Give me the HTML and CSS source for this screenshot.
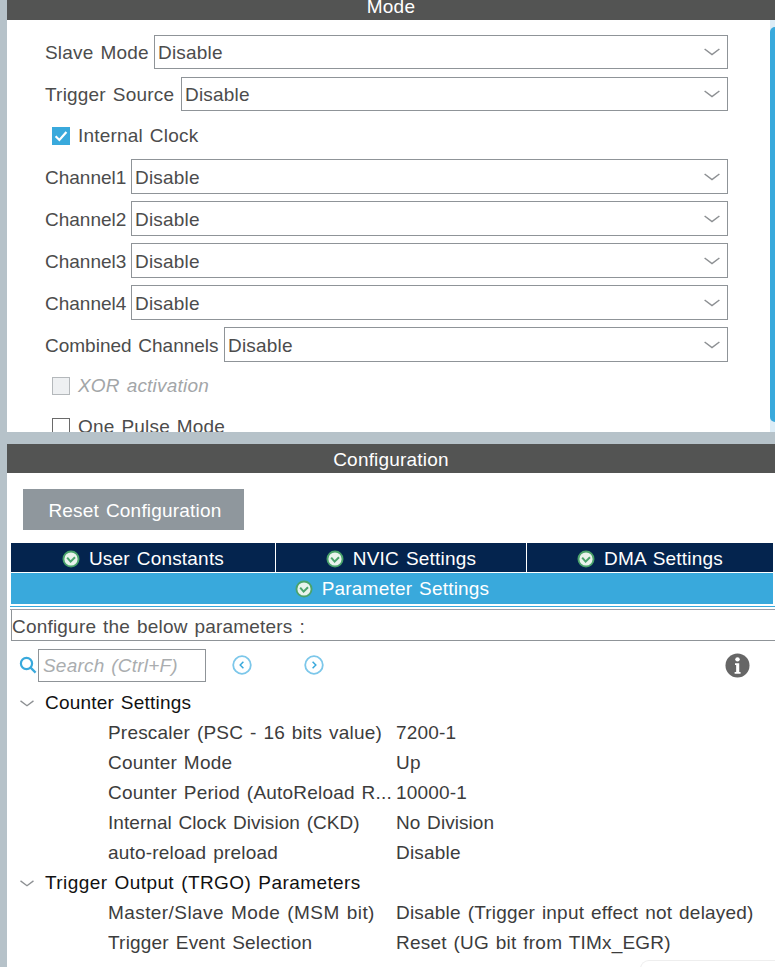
FILE: index.html
```html
<!DOCTYPE html>
<html lang="en">
<head>
<meta charset="utf-8">
<title>Mode and Configuration</title>
<link rel="stylesheet" href="styles.css">
</head>
<body>
<svg class="defs" width="0" height="0" aria-hidden="true">
  <symbol id="ok" viewBox="0 0 18 18">
    <circle cx="9" cy="9" r="8.5" fill="#4aa36b"/>
    <circle cx="9" cy="9" r="6.6" fill="#e9f3ec"/>
    <path d="M5.2 7.6 8.6 11.6 13 7.2" fill="none" stroke="#4aa36b" stroke-width="2"/>
  </symbol>
  <symbol id="chev" viewBox="0 0 16 8">
    <path d="M.6 1 8 6.6 15.4 1" fill="none" stroke="#8d9093" stroke-width="1.5"/>
  </symbol>
</svg>
<main class="app">
  <section class="mode">
    <h2 class="bar bar-mode">Mode</h2>
    <div class="mode-body">
      <div class="row"><span class="lbl w-slave">Slave Mode</span><div class="sel">Disable<svg class="chev"><use href="#chev"/></svg></div></div>
      <div class="row"><span class="lbl w-trigger">Trigger Source</span><div class="sel">Disable<svg class="chev"><use href="#chev"/></svg></div></div>
      <div class="check-row first"><span class="box on"><svg viewBox="0 0 18 18"><path d="M3.6 9.2 7.4 13 14.4 5" fill="none" stroke="#fff" stroke-width="2.2"/></svg></span><span class="txt">Internal Clock</span></div>
      <div class="row tall"><span class="lbl w-channel">Channel1</span><div class="sel">Disable<svg class="chev"><use href="#chev"/></svg></div></div>
      <div class="row tall"><span class="lbl w-channel">Channel2</span><div class="sel">Disable<svg class="chev"><use href="#chev"/></svg></div></div>
      <div class="row tall"><span class="lbl w-channel">Channel3</span><div class="sel">Disable<svg class="chev"><use href="#chev"/></svg></div></div>
      <div class="row tall"><span class="lbl w-channel">Channel4</span><div class="sel">Disable<svg class="chev"><use href="#chev"/></svg></div></div>
      <div class="row tall"><span class="lbl w-combined">Combined Channels</span><div class="sel">Disable<svg class="chev"><use href="#chev"/></svg></div></div>
      <div class="check-row"><span class="box off"></span><span class="txt dim">XOR activation</span></div>
      <div class="check-row"><span class="box"></span><span class="txt">One Pulse Mode</span></div>
    </div>
    <div class="scroll-track"><div class="scroll-thumb"></div></div>
  </section>
  <section class="config">
    <h2 class="bar bar-config">Configuration</h2>
    <div class="config-body">
      <button class="reset" type="button">Reset Configuration</button>
      <div class="tabs">
        <div class="tab t1"><svg class="ok"><use href="#ok"/></svg>User Constants</div>
        <div class="tab t2"><svg class="ok"><use href="#ok"/></svg>NVIC Settings</div>
        <div class="tab t3"><svg class="ok"><use href="#ok"/></svg>DMA Settings</div>
      </div>
      <div class="tab active"><svg class="ok"><use href="#ok"/></svg>Parameter Settings</div>
      <div class="rule-blue"></div>
      <div class="rule-gray"></div>
      <div class="note">Configure the below parameters :</div>
      <div class="tools">
        <svg class="mag" viewBox="0 0 18 18"><circle cx="7.5" cy="7.5" r="5.6" fill="none" stroke="#39a9dc" stroke-width="2.2"/><path d="M11.6 11.6 16.6 16.6" stroke="#39a9dc" stroke-width="2.2"/></svg>
        <div class="search">Search (Ctrl+F)</div>
        <svg class="nav prev" viewBox="0 0 20 20"><circle cx="10" cy="10" r="8.8" fill="none" stroke="#7cc7ea" stroke-width="1.8"/><path d="M11.4 6.8 8.2 10 11.4 13.2" fill="none" stroke="#39a9dc" stroke-width="1.5"/></svg>
        <svg class="nav next" viewBox="0 0 20 20"><circle cx="10" cy="10" r="8.8" fill="none" stroke="#7cc7ea" stroke-width="1.8"/><path d="M8.6 6.8 11.8 10 8.6 13.2" fill="none" stroke="#39a9dc" stroke-width="1.5"/></svg>
        <svg class="info" viewBox="0 0 26 26"><circle cx="13" cy="13" r="12.5" fill="#666"/><circle cx="13" cy="6.6" r="2.3" fill="#fff"/><path d="M10.4 10.6h4.4v9.2h1.4v1.8H10v-1.8h1.6v-7.4h-1.2z" fill="#fff"/></svg>
      </div>
      <div class="tree">
        <div class="group"><svg class="tree-chev"><use href="#chev"/></svg>Counter Settings</div>
        <div class="item"><span class="k">Prescaler (PSC - 16 bits value)</span><span class="v">7200-1</span></div>
        <div class="item"><span class="k">Counter Mode</span><span class="v">Up</span></div>
        <div class="item"><span class="k">Counter Period (AutoReload R...</span><span class="v">10000-1</span></div>
        <div class="item"><span class="k tight">Internal Clock Division (CKD)</span><span class="v tight">No Division</span></div>
        <div class="item"><span class="k">auto-reload preload</span><span class="v">Disable</span></div>
        <div class="group"><svg class="tree-chev"><use href="#chev"/></svg><span class="wide">Trigger Output (TRGO) Parameters</span></div>
        <div class="item"><span class="k wide">Master/Slave Mode (MSM bit)</span><span class="v">Disable (Trigger input effect not delayed)</span></div>
        <div class="item"><span class="k">Trigger Event Selection</span><span class="v">Reset (UG bit from TIMx_EGR)</span></div>
      </div>
    </div>
    <div class="corner"></div>
  </section>
</main>
</body>
</html>
```
FILE: styles.css
```css
* { box-sizing: border-box; }
html, body { margin: 0; padding: 0; height: 100%; overflow: hidden; }
body { background: #b6c2c9; font-family: "Liberation Sans", Arial, sans-serif; font-size: 19px; letter-spacing: .2px; word-spacing: 1.4px; color: #4c4c4c; }
.defs { position: absolute; }
.app { padding-left: 7px; height: 967px; display: flex; flex-direction: column; gap: 12px; }
.bar { margin: 0; flex: none; background: #535453; color: #fff; font-weight: 400; font-size: 19px; text-align: center; }
.mode { position: relative; flex: none; height: 432px; background: #fff; overflow: hidden; }
.bar-mode { height: 20px; line-height: 14px; }
.mode-body { padding: 15px 47px 0 38px; }
.row { display: flex; align-items: center; height: 34px; margin-bottom: 8px; }
.row.tall { height: 35px; margin-bottom: 7px; }
.lbl { flex: none; padding-top: 2px; white-space: nowrap; }
.w-slave { width: 109px; }
.w-trigger { width: 136px; }
.w-channel { width: 86px; letter-spacing: 0; }
.w-combined { width: 179px; letter-spacing: 0; }
.sel { flex: 1; height: 100%; border: 1px solid #8f9498; padding: 2px 0 0 3px; display: flex; align-items: center; justify-content: space-between; }
.chev { width: 16px; height: 8px; margin: 0 7px 2px 0; }
.check-row { display: flex; align-items: center; gap: 8px; height: 34px; margin: 7px 0 0 7px; }
.check-row.first { margin: 0 0 6px 7px; }
.box { width: 18px; height: 18px; border: 1.5px solid #6a6a6a; flex: none; display: block; }
.box.on { background: #39a9dc; border: 0; }
.box.on svg { display: block; width: 18px; height: 18px; }
.box.off { background: #eef0f2; border-color: #b4b8bb; }
.dim { color: #a3a6a8; font-style: italic; }
.scroll-track { position: absolute; right: 0; top: 20px; bottom: 0; width: 5px; background: #dcecf6; }
.scroll-thumb { margin-top: 7px; height: 395px; background: #39a9dc; border-radius: 5px 0 0 5px; }
.config { position: relative; flex: 1; background: #fff; display: flex; flex-direction: column; }
.bar-config { height: 29px; line-height: 31px; }
.config-body { flex: 1; padding: 16px 0 0 4px; }
.reset { display: block; margin-left: 12px; width: 221px; height: 41px; border: 0; background: #8f979d; color: #fff; font: inherit; letter-spacing: inherit; word-spacing: inherit; padding: 2px 0 0 3px; }
.tabs { display: flex; margin-top: 13px; width: 762px; gap: 1px; }
.tab { height: 29px; padding-top: 3px; background: #04244e; color: #fff; display: flex; align-items: center; justify-content: center; gap: 9px; }
.t1 { width: 264px; }
.t2 { width: 250px; }
.t3 { flex: 1; }
.ok { width: 18px; height: 18px; }
.tab.active { width: 762px; height: 31px; margin-top: 1px; background: #39a9dc; padding-top: 1px; }
.rule-blue { height: 1px; margin: 2px 0 0 -1px; background: #39a9dc; }
.rule-gray { height: 1px; margin: 2px 0 0 -1px; background: #9b9ea8; }
.note { height: 31px; border: 1px solid #8f9498; border-top: 0; border-right: 0; line-height: 34px; white-space: nowrap; }
.tools { display: flex; align-items: center; height: 34px; margin-top: 7px; padding-left: 8px; }
.mag { width: 18px; height: 18px; flex: none; }
.search { width: 168px; height: 33px; margin-left: 1px; border: 1px solid #8f9498; padding-left: 4px; line-height: 31px; color: #aaadaf; font-style: italic; white-space: nowrap; }
.nav { width: 20px; height: 20px; flex: none; }
.prev { margin-left: 26px; }
.next { margin-left: 52px; }
.info { width: 25px; height: 25px; margin-left: auto; margin-right: 25px; }
.tree { margin-top: 6px; }
.group, .item { height: 30px; display: flex; align-items: center; white-space: nowrap; }
.group { color: #111; padding-left: 9px; }
.tree-chev { width: 14px; height: 7px; margin-right: 11px; }
.item { color: #3c3c3c; padding-left: 97px; }
.k { width: 288px; flex: none; overflow: hidden; }
.tight { letter-spacing: .05px; }
.wide { letter-spacing: .42px; }
.corner { position: absolute; right: 0; bottom: -2px; width: 135px; height: 9px; background: #fff; border: 1px solid #eee; border-right: 0; border-bottom: 0; border-radius: 9px 0 0 0; }
```
